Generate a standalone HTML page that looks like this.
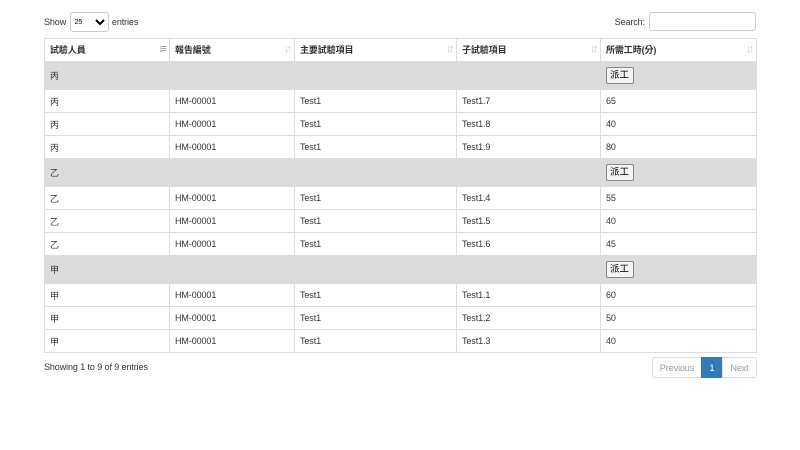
<!DOCTYPE html>
<html><head><meta charset="utf-8">
<style>
body{margin:0;width:800px;height:450px;background:#fff;font-family:"Liberation Sans","Noto Sans CJK TC",sans-serif;font-size:9px;letter-spacing:-0.1px;color:#333;position:relative;overflow:hidden}
.top{position:absolute;top:12px;left:44px;height:20px;line-height:20px}
.top select{width:39px;height:20px;font-size:7px;border:1px solid #ccc;border-radius:3px;background:#fff;margin:0 1px;vertical-align:top}
.search{position:absolute;top:12px;right:44px;height:20px;line-height:20px}
.search input{width:105px;height:17px;border:1px solid #ccc;border-radius:3px;margin-left:4px;vertical-align:top;padding:0}
table{position:absolute;left:44px;top:38px;width:712px;border-collapse:collapse;table-layout:fixed}
td,th{border:1px solid #ddd;padding:0 5px;text-align:left;height:22px;white-space:nowrap}
th{font-weight:bold;position:relative;height:22px;line-height:20px}
th .s{position:absolute;right:5px;top:4px;color:#ccc;font-size:11px;font-weight:normal;letter-spacing:-3px;line-height:12px}
th .s.a{color:#999}
tr.g td{background:#dcdcdc;border-left:none;border-right:none;height:27px}
tr.g td:first-child{border-left:1px solid #ddd}
tr.g td:last-child{border-right:1px solid #ddd}
button{font-family:inherit;font-size:9.5px;padding:0 3px;border:1px solid #888;border-radius:2px;background:#f4f4f4;height:17px;width:28px;line-height:15px}
.info{position:absolute;left:44px;top:362px}
.pg{position:absolute;left:652px;top:357px;display:flex;height:21px;line-height:21px}
.pg div{border:1px solid #ddd;color:#999;margin-left:-1px;text-align:center;box-sizing:border-box;height:21px}
.pg .c{background:#337ab7;color:#fff;border-color:#337ab7}
.pg div:first-child{border-radius:3px 0 0 3px;margin-left:0}
.pg div:last-child{border-radius:0 3px 3px 0}
</style></head><body>
<div class="top">Show <select><option>25</option></select> entries</div>
<div class="search">Search:<input></div>
<table>
<colgroup><col style="width:125px"><col style="width:125px"><col style="width:162px"><col style="width:144px"><col style="width:156px"></colgroup>
<tr><th>試驗人員<span class="s a">↓≡</span></th><th>報告編號<span class="s">↓↑</span></th><th>主要試驗項目<span class="s">↓↑</span></th><th>子試驗項目<span class="s">↓↑</span></th><th>所需工時(分)<span class="s">↓↑</span></th></tr>
<tr class="g"><td colspan="4">丙</td><td><button>派工</button></td></tr>
<tr><td>丙</td><td>HM-00001</td><td>Test1</td><td>Test1.7</td><td>65</td></tr>
<tr><td>丙</td><td>HM-00001</td><td>Test1</td><td>Test1.8</td><td>40</td></tr>
<tr><td>丙</td><td>HM-00001</td><td>Test1</td><td>Test1.9</td><td>80</td></tr>
<tr class="g"><td colspan="4">乙</td><td><button>派工</button></td></tr>
<tr><td>乙</td><td>HM-00001</td><td>Test1</td><td>Test1.4</td><td>55</td></tr>
<tr><td>乙</td><td>HM-00001</td><td>Test1</td><td>Test1.5</td><td>40</td></tr>
<tr><td>乙</td><td>HM-00001</td><td>Test1</td><td>Test1.6</td><td>45</td></tr>
<tr class="g"><td colspan="4">甲</td><td><button>派工</button></td></tr>
<tr><td>甲</td><td>HM-00001</td><td>Test1</td><td>Test1.1</td><td>60</td></tr>
<tr><td>甲</td><td>HM-00001</td><td>Test1</td><td>Test1.2</td><td>50</td></tr>
<tr><td>甲</td><td>HM-00001</td><td>Test1</td><td>Test1.3</td><td>40</td></tr>
</table>
<div class="info">Showing 1 to 9 of 9 entries</div>
<div class="pg"><div style="width:50px">Previous</div><div class="c" style="width:22px">1</div><div style="width:35px">Next</div></div>
</body></html>
